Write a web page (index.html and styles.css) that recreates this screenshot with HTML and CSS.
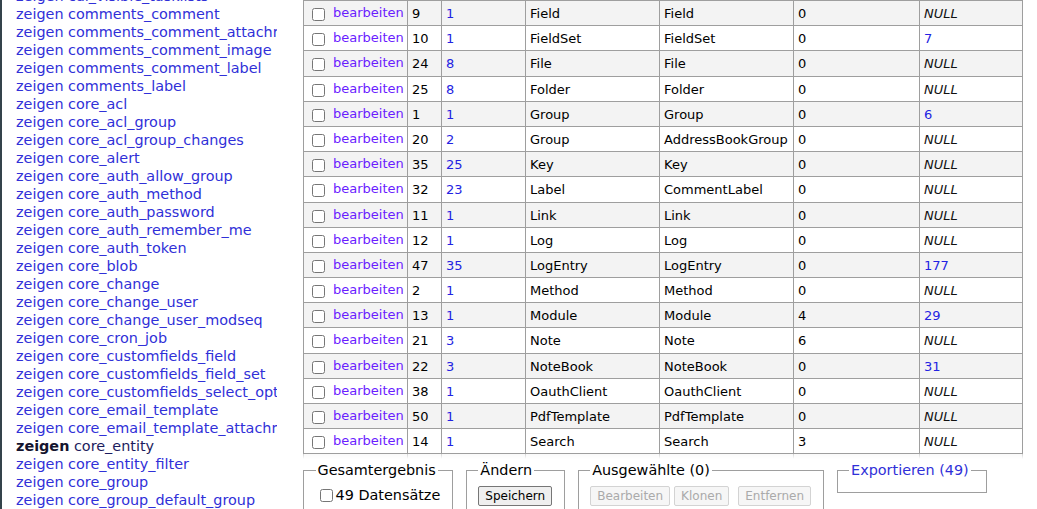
FILE: index.html
```html
<!DOCTYPE html>
<html lang="de">
<head>
<meta charset="utf-8">
<title>Auswählen: core_entity</title>
<link rel="stylesheet" href="styles.css">
</head>
<body>
<div class="page">
  <nav class="menu">
    <ul class="tables">
      <li><a class="sel">zeigen</a> <a class="tbl">cal_visible_tasklists</a></li>
      <li><a class="sel">zeigen</a> <a class="tbl">comments_comment</a></li>
      <li><a class="sel">zeigen</a> <a class="tbl">comments_comment_attachment</a></li>
      <li><a class="sel">zeigen</a> <a class="tbl">comments_comment_image</a></li>
      <li><a class="sel">zeigen</a> <a class="tbl">comments_comment_label</a></li>
      <li><a class="sel">zeigen</a> <a class="tbl">comments_label</a></li>
      <li><a class="sel">zeigen</a> <a class="tbl">core_acl</a></li>
      <li><a class="sel">zeigen</a> <a class="tbl">core_acl_group</a></li>
      <li><a class="sel">zeigen</a> <a class="tbl">core_acl_group_changes</a></li>
      <li><a class="sel">zeigen</a> <a class="tbl">core_alert</a></li>
      <li><a class="sel">zeigen</a> <a class="tbl">core_auth_allow_group</a></li>
      <li><a class="sel">zeigen</a> <a class="tbl">core_auth_method</a></li>
      <li><a class="sel">zeigen</a> <a class="tbl">core_auth_password</a></li>
      <li><a class="sel">zeigen</a> <a class="tbl">core_auth_remember_me</a></li>
      <li><a class="sel">zeigen</a> <a class="tbl">core_auth_token</a></li>
      <li><a class="sel">zeigen</a> <a class="tbl">core_blob</a></li>
      <li><a class="sel">zeigen</a> <a class="tbl">core_change</a></li>
      <li><a class="sel">zeigen</a> <a class="tbl">core_change_user</a></li>
      <li><a class="sel">zeigen</a> <a class="tbl">core_change_user_modseq</a></li>
      <li><a class="sel">zeigen</a> <a class="tbl">core_cron_job</a></li>
      <li><a class="sel">zeigen</a> <a class="tbl">core_customfields_field</a></li>
      <li><a class="sel">zeigen</a> <a class="tbl">core_customfields_field_set</a></li>
      <li><a class="sel">zeigen</a> <a class="tbl">core_customfields_select_option</a></li>
      <li><a class="sel">zeigen</a> <a class="tbl">core_email_template</a></li>
      <li><a class="sel">zeigen</a> <a class="tbl">core_email_template_attachment</a></li>
      <li class="active"><a class="sel">zeigen</a> <a class="tbl">core_entity</a></li>
      <li><a class="sel">zeigen</a> <a class="tbl">core_entity_filter</a></li>
      <li><a class="sel">zeigen</a> <a class="tbl">core_group</a></li>
      <li><a class="sel">zeigen</a> <a class="tbl">core_group_default_group</a></li>
      <li><a class="sel">zeigen</a> <a class="tbl">core_group_default_group_user</a></li>
    </ul>
  </nav>

  <main class="content">
    <div class="scroller">
      <table class="data">
        <colgroup>
          <col class="c-edit"><col class="c-id"><col class="c-mod"><col class="c-name"><col class="c-client"><col class="c-high"><col class="c-def">
        </colgroup>
        <tbody>
          <tr><td><input type="checkbox"><a class="edit">bearbeiten</a></td><td>9</td><td><a class="num">1</a></td><td>Field</td><td>Field</td><td>0</td><td><i>NULL</i></td></tr>
          <tr><td><input type="checkbox"><a class="edit">bearbeiten</a></td><td>10</td><td><a class="num">1</a></td><td>FieldSet</td><td>FieldSet</td><td>0</td><td><a class="num">7</a></td></tr>
          <tr><td><input type="checkbox"><a class="edit">bearbeiten</a></td><td>24</td><td><a class="num">8</a></td><td>File</td><td>File</td><td>0</td><td><i>NULL</i></td></tr>
          <tr><td><input type="checkbox"><a class="edit">bearbeiten</a></td><td>25</td><td><a class="num">8</a></td><td>Folder</td><td>Folder</td><td>0</td><td><i>NULL</i></td></tr>
          <tr><td><input type="checkbox"><a class="edit">bearbeiten</a></td><td>1</td><td><a class="num">1</a></td><td>Group</td><td>Group</td><td>0</td><td><a class="num">6</a></td></tr>
          <tr><td><input type="checkbox"><a class="edit">bearbeiten</a></td><td>20</td><td><a class="num">2</a></td><td>Group</td><td>AddressBookGroup</td><td>0</td><td><i>NULL</i></td></tr>
          <tr><td><input type="checkbox"><a class="edit">bearbeiten</a></td><td>35</td><td><a class="num">25</a></td><td>Key</td><td>Key</td><td>0</td><td><i>NULL</i></td></tr>
          <tr><td><input type="checkbox"><a class="edit">bearbeiten</a></td><td>32</td><td><a class="num">23</a></td><td>Label</td><td>CommentLabel</td><td>0</td><td><i>NULL</i></td></tr>
          <tr><td><input type="checkbox"><a class="edit">bearbeiten</a></td><td>11</td><td><a class="num">1</a></td><td>Link</td><td>Link</td><td>0</td><td><i>NULL</i></td></tr>
          <tr><td><input type="checkbox"><a class="edit">bearbeiten</a></td><td>12</td><td><a class="num">1</a></td><td>Log</td><td>Log</td><td>0</td><td><i>NULL</i></td></tr>
          <tr><td><input type="checkbox"><a class="edit">bearbeiten</a></td><td>47</td><td><a class="num">35</a></td><td>LogEntry</td><td>LogEntry</td><td>0</td><td><a class="num">177</a></td></tr>
          <tr><td><input type="checkbox"><a class="edit">bearbeiten</a></td><td>2</td><td><a class="num">1</a></td><td>Method</td><td>Method</td><td>0</td><td><i>NULL</i></td></tr>
          <tr><td><input type="checkbox"><a class="edit">bearbeiten</a></td><td>13</td><td><a class="num">1</a></td><td>Module</td><td>Module</td><td>4</td><td><a class="num">29</a></td></tr>
          <tr><td><input type="checkbox"><a class="edit">bearbeiten</a></td><td>21</td><td><a class="num">3</a></td><td>Note</td><td>Note</td><td>6</td><td><i>NULL</i></td></tr>
          <tr><td><input type="checkbox"><a class="edit">bearbeiten</a></td><td>22</td><td><a class="num">3</a></td><td>NoteBook</td><td>NoteBook</td><td>0</td><td><a class="num">31</a></td></tr>
          <tr><td><input type="checkbox"><a class="edit">bearbeiten</a></td><td>38</td><td><a class="num">1</a></td><td>OauthClient</td><td>OauthClient</td><td>0</td><td><i>NULL</i></td></tr>
          <tr><td><input type="checkbox"><a class="edit">bearbeiten</a></td><td>50</td><td><a class="num">1</a></td><td>PdfTemplate</td><td>PdfTemplate</td><td>0</td><td><i>NULL</i></td></tr>
          <tr><td><input type="checkbox"><a class="edit">bearbeiten</a></td><td>14</td><td><a class="num">1</a></td><td>Search</td><td>Search</td><td>3</td><td><i>NULL</i></td></tr>
          <tr><td><input type="checkbox"><a class="edit">bearbeiten</a></td><td>15</td><td><a class="num">1</a></td><td>Settings</td><td>Settings</td><td>0</td><td><i>NULL</i></td></tr>
        </tbody>
      </table>
      <div class="fade"></div>
    </div>

    <form class="actions">
      <fieldset class="box">
        <legend>Gesamtergebnis</legend>
        <label class="check"><input type="checkbox">49 Datensätze</label>
      </fieldset>
      <fieldset class="box">
        <legend>Ändern</legend>
        <button type="button" class="btn">Speichern</button>
      </fieldset>
      <fieldset class="box">
        <legend>Ausgewählte (0)</legend>
        <div class="btn-row">
          <button type="button" class="btn" disabled>Bearbeiten</button>
          <button type="button" class="btn" disabled>Klonen</button>
          <button type="button" class="btn btn-far" disabled>Entfernen</button>
        </div>
      </fieldset>
      <fieldset class="box box-empty">
        <legend><a class="export">Exportieren (49)</a></legend>
      </fieldset>
    </form>
  </main>
</div>
</body>
</html>
```

FILE: styles.css
```css
html, body {
  margin: 0;
  padding: 0;
  height: 509px;
  overflow: hidden;
  background: #fff;
  color: #000;
  font-family: "DejaVu Sans", Verdana, sans-serif;
}

.page {
  display: flex;
  height: 509px;
  border-left: 2px solid #34434b;
}

/* ---------- sidebar ---------- */
.menu {
  flex: none;
  width: 275px;
  box-sizing: border-box;
  padding-left: 14px;
  overflow: hidden;
}

.tables {
  list-style: none;
  margin: -13px 0 0;
  padding: 0;
  font-size: 14.4px;
  line-height: 18px;
  white-space: nowrap;
}

.tables a {
  color: #3030d8;
  text-decoration: none;
}

.tables .active .sel {
  font-weight: bold;
  color: #14142e;
}

.tables .active .tbl {
  color: #1c1c5e;
}

/* ---------- content ---------- */
.content {
  flex: none;
  margin-left: 26px;
  width: 734px;
}

.scroller {
  position: relative;
  height: 459px;
  overflow: hidden;
}

.data {
  border-collapse: collapse;
  table-layout: fixed;
  width: 720px;
  font-size: 13px;
}

.c-edit { width: 104px; }
.c-id { width: 34px; }
.c-mod { width: 84px; }
.c-name { width: 134px; }
.c-client { width: 134px; }
.c-high { width: 126px; }
.c-def { width: 103px; }

.data td {
  border: 1px solid #9e9e9e;
  padding: 4px 4px 2.2px;
  line-height: 18px;
  white-space: nowrap;
  overflow: hidden;
}

.data tr:nth-child(odd) td {
  background: #f3f3f3;
}

.data input[type="checkbox"] {
  width: 13px;
  height: 13px;
  margin: 0 8px 0 4px;
  vertical-align: middle;
}

.data .edit {
  color: #6a1cff;
  text-decoration: none;
  line-height: 12px;
  vertical-align: 1.5px;
}

.data .num {
  color: #2323e2;
  text-decoration: none;
}

.data i {
  color: #111;
}

.fade {
  position: absolute;
  left: 0;
  right: 0;
  bottom: 0;
  height: 5px;
  background: linear-gradient(rgba(255, 255, 255, 0.55), #fff);
}

/* ---------- action fieldsets ---------- */
.actions {
  display: flex;
  align-items: flex-start;
  gap: 13px;
  margin: 2px 0 0;
  font-size: 14.4px;
  line-height: 18px;
}

.box {
  margin: 0;
  min-width: 0;
  padding: 7px 11.5px 6px;
  border: 1px solid #9e9e9e;
}

.box-empty {
  padding-right: 15px;
}

.box legend {
  padding: 0 2px;
}

.check {
  display: flex;
  align-items: center;
  white-space: nowrap;
}

.check input {
  width: 13px;
  height: 13px;
  margin: 3px 3px 2px 4px;
}

.btn-row {
  display: flex;
  gap: 4px;
}

.btn {
  font-family: "DejaVu Sans", Verdana, sans-serif;
  font-size: 12px;
  line-height: 14px;
  height: 20px;
  padding: 2px 6px;
  border: 1px solid #767676;
  border-radius: 2px;
  background: #efefef;
  color: #000;
  white-space: nowrap;
}

.btn:disabled {
  border-color: #d3d3d3;
  background: #f6f6f6;
  color: #aaaaaa;
}

.btn-far {
  margin-left: 5px;
}

.export {
  color: #3030d8;
  text-decoration: none;
}
```
